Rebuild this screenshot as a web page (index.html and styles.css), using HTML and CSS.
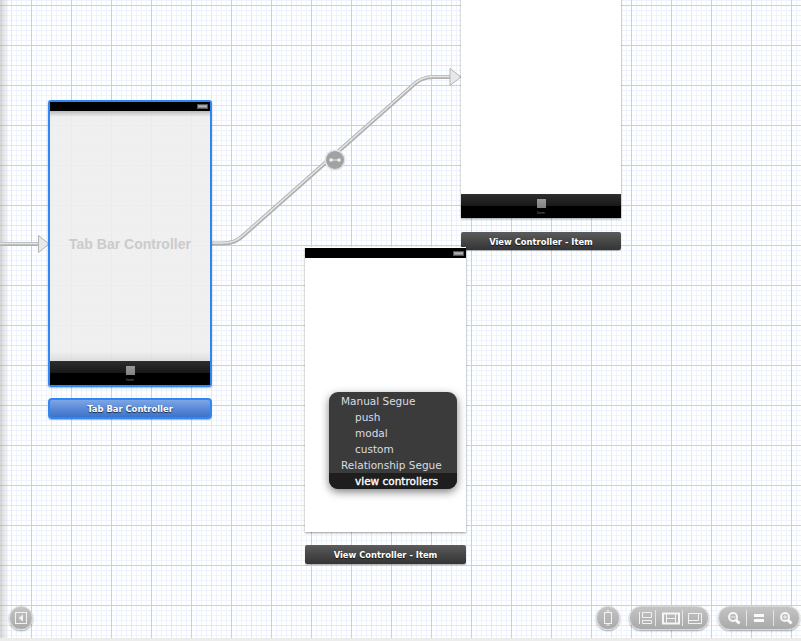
FILE: index.html
```html
<!DOCTYPE html>
<html lang="en">
<head>
<meta charset="utf-8">
<title>Storyboard</title>
<link rel="stylesheet" href="styles.css">
</head>
<body>
<main class="canvas">
  <svg class="segues" width="801" height="641" viewBox="0 0 801 641">
    <g fill="none" stroke-linecap="butt">
      <path class="seg-out" d="M0 244H40"/>
      <path class="seg-in" d="M0 243.500H40"/>
      <path class="seg-out" d="M212 243.500H222C232 243.500 238 241 245 234L410 88C418 80 424 77 434 77H452"/>
      <path class="seg-in" d="M212 243H222C232 243 238 240.500 245 233.500L410 87.500C418 79.500 424 76.500 434 76.500H452"/>
    </g>
    <path class="arrow" d="M38.500 235.500L49 244L38.500 252.500Z"/>
    <path class="arrow" d="M450 68.500L461 77L450 85.500Z"/>
    <circle class="seg-ring" cx="335" cy="160" r="10.500"/>
    <circle class="seg-dot" cx="335" cy="160" r="9"/>
    <path class="seg-link" d="M331 160H339"/>
    <circle class="seg-pt" cx="331" cy="160" r="1.700"/>
    <circle class="seg-pt" cx="339" cy="160" r="1.700"/>
  </svg>

  <section class="scene scene-tab">
    <div class="screen screen-sel">
      <div class="status"><span class="battery"></span></div>
      <div class="body body-grey"><span class="ghost">Tab Bar Controller</span></div>
      <div class="tabbar"><span class="tab-icon"></span><span class="tab-text">Item</span></div>
    </div>
  </section>
  <div class="label label-sel label-tab">Tab Bar Controller</div>

  <section class="scene scene-top">
    <div class="screen">
      <div class="body"></div>
      <div class="tabbar"><span class="tab-icon"></span><span class="tab-text">Item</span></div>
    </div>
  </section>
  <div class="label label-top">View Controller - Item</div>

  <section class="scene scene-mid">
    <div class="screen screen-mid">
      <div class="status"><span class="battery"></span></div>
      <div class="body"></div>
    </div>
  </section>
  <div class="label label-mid">View Controller - Item</div>

  <ul class="menu">
    <li class="menu-head">Manual Segue</li>
    <li class="menu-item">push</li>
    <li class="menu-item">modal</li>
    <li class="menu-item">custom</li>
    <li class="menu-head">Relationship Segue</li>
    <li class="menu-item menu-active">view controllers</li>
  </ul>

  <footer class="toolbar">
    <div class="pill round">
      <svg width="22" height="24" viewBox="0 0 22 24"><rect class="ic" x="5.500" y="6.500" width="11" height="11"/><path class="ic-fill" d="M13 8.500V15.500L8.500 12Z"/></svg>
    </div>
    <div class="tool-right">
      <div class="pill round">
        <svg width="22" height="24" viewBox="0 0 22 24"><rect class="ic" x="7.500" y="6.500" width="7" height="11"/><path class="ic" d="M9.500 5H12.500M9.500 19H12.500"/></svg>
      </div>
      <div class="pill wide-a">
        <svg width="25" height="24" viewBox="0 0 25 24"><path class="ic" d="M9.500 6V18M12.500 6.500H21.500V11.500H12.500ZM12.500 14.500H21.500V17.500H12.500Z"/></svg>
        <i class="sep"></i>
        <svg width="26" height="24" viewBox="0 0 26 24"><path class="ic2" d="M7 7.500H23V17.500H7Z"/><path class="ic" d="M10.500 7.500V17.500M19.500 7.500V17.500M10.500 12.500H19.500"/></svg>
        <i class="sep"></i>
        <svg width="25" height="24" viewBox="0 0 25 24"><path class="ic" d="M5.500 17.500H18.500V7.500H5.500ZM5.500 14.500H15.500V7.500"/></svg>
      </div>
      <div class="pill wide-b">
        <svg width="27" height="24" viewBox="0 0 27 24"><circle class="ic2" cx="14" cy="11" r="4"/><path class="ic3" d="M17 14L20.500 17.500"/><path class="ic" d="M11.500 11H16.500"/></svg>
        <i class="sep"></i>
        <svg width="26" height="24" viewBox="0 0 26 24"><path class="ic3" d="M7 9.500H17M7 14.500H17"/></svg>
        <i class="sep"></i>
        <svg width="25" height="24" viewBox="0 0 25 24"><circle class="ic2" cx="11" cy="11" r="4"/><path class="ic3" d="M14 14L17.500 17.500"/><path class="ic" d="M8.500 11H13.500M11 8.500V13.500"/></svg>
      </div>
    </div>
  </footer>
</main>
</body>
</html>
```

FILE: styles.css
```css
* { box-sizing: border-box; }
html, body { margin: 0; padding: 0; }
body { width: 801px; height: 641px; overflow: hidden; background: #fff; }

.canvas {
  position: relative;
  width: 801px;
  height: 641px;
  overflow: hidden;
  background-color: #fff;
  background-image:
    linear-gradient(to right, #bcd3f2 1px, transparent 1px),
    linear-gradient(to bottom, #bcd3f2 1px, transparent 1px),
    linear-gradient(to right, #dde8f9 1px, transparent 1px),
    linear-gradient(to bottom, #dde8f9 1px, transparent 1px),
    linear-gradient(to right, #eef4fd 1px, transparent 1px),
    linear-gradient(to bottom, #eef4fd 1px, transparent 1px);
  background-size: 40px 40px, 40px 40px, 20px 20px, 20px 20px, 5px 5px, 5px 5px;
  background-position: 31px 0, 0 5px, 11px 0, 0 5px, 1px 0, 0 0;
}
.canvas::before {
  content: "";
  position: absolute;
  left: 0; top: 0; bottom: 0;
  width: 8px;
  background: linear-gradient(to right, rgba(150,150,150,.4), rgba(200,200,200,.1));
}
.canvas::after {
  content: "";
  position: absolute;
  left: 0; right: 0; bottom: 0;
  height: 3px;
  background: #ececec;
}

.segues { position: absolute; left: 0; top: 0; }
.seg-out { stroke: #b0b0b0; stroke-width: 4; }
.seg-in { stroke: #e6e6e6; stroke-width: 1.500; }
.arrow { fill: #e8e8e8; stroke: #b4b4b4; stroke-width: 1; stroke-linejoin: round; }
.seg-ring { fill: #e2e2e2; }
.seg-dot { fill: #a2a2a2; }
.seg-link { stroke: #e6e6e6; stroke-width: 1; }
.seg-pt { fill: #f2f2f2; }

.scene { position: absolute; }
.scene-tab { left: 48px; top: 100px; width: 164px; height: 287px; }
.scene-top { left: 461px; top: -60px; width: 160px; height: 278px; }
.scene-mid { left: 305px; top: 247px; width: 161px; height: 285px; }

.screen {
  display: flex;
  flex-direction: column;
  width: 100%;
  height: 100%;
  background: #fff;
  box-shadow: 0 1px 2px rgba(0,0,0,.4);
}
.screen-mid { padding-top: 1px; }
.screen-sel {
  border: 2px solid #2f86f5;
  border-radius: 3px;
  background: transparent;
  box-shadow: 0 1px 2px rgba(0,0,0,.3);
}
.status {
  flex: none;
  display: flex;
  justify-content: flex-end;
  align-items: center;
  height: 10px;
  padding-right: 2px;
  background: #000;
  position: relative;
  z-index: 1;
}
.screen-sel .status { height: 9px; }
.battery {
  width: 11px;
  height: 5px;
  background: linear-gradient(#888, #c0c0c0 40%, #777);
  border: 1px solid #555;
}
.body { flex: 1; min-height: 0; }
.body-grey {
  display: flex;
  align-items: center;
  justify-content: center;
  padding-top: 16px;
  background:
    linear-gradient(to bottom, rgba(0,0,0,.22), transparent 6px),
    linear-gradient(to bottom, transparent 240px, rgba(0,0,0,.08)),
    rgba(238,238,238,.88);
}
.ghost {
  font: bold 14px "Liberation Sans", Arial, sans-serif;
  color: #cbcbcb;
  white-space: nowrap;
}
.tabbar {
  flex: none;
  height: 24px;
  display: flex;
  flex-direction: column;
  align-items: center;
  padding-top: 5px;
  background: linear-gradient(#3a3a3a 0, #222 1px, #2c2c2c 1px, #181818 12px, #000 12px);
}
.tab-icon {
  width: 9px;
  height: 9px;
  background: linear-gradient(#9a9a9a, #808080);
}
.tab-text {
  margin-top: 2px;
  font: 4px/6px "Liberation Sans", Arial, sans-serif;
  color: #777;
}

.label {
  position: absolute;
  display: flex;
  align-items: center;
  justify-content: center;
  font: bold 8.400px "DejaVu Sans", sans-serif;
  color: #fff;
  text-shadow: 0 1px 1px rgba(0,0,0,.7);
  background: linear-gradient(#5c5c5c, #474747 50%, #343434);
  border-radius: 2px;
  box-shadow: 0 1px 1px rgba(0,0,0,.3);
}
.label-top { left: 461px; top: 232px; width: 160px; height: 18px; padding-top: 1px; }
.label-mid { left: 305px; top: 545px; width: 161px; height: 19px; }
.label-sel {
  background: linear-gradient(#7da6e4, #5a8ad8 50%, #3f72c8);
  border: 2px solid #2f86f5;
  border-radius: 4px;
}
.label-tab { left: 48px; top: 398px; width: 164px; height: 21px; }

.menu {
  position: absolute;
  left: 329px;
  top: 392px;
  width: 128px;
  height: 97px;
  margin: 0;
  padding: 1px 0 0;
  list-style: none;
  overflow: hidden;
  background: #3b3b3b;
  border-radius: 9px;
  box-shadow: 0 3px 8px rgba(0,0,0,.5);
  font: 10.500px/16px "DejaVu Sans", sans-serif;
  color: #d9dde4;
}
.menu-head { padding-left: 12px; white-space: nowrap; }
.menu-item { padding-left: 26px; white-space: nowrap; }
.menu-active {
  height: 17px;
  background: #1e1e1e;
  color: #fff;
  -webkit-text-stroke: .35px #fff;
}

.toolbar {
  position: absolute;
  left: 9px;
  right: 1px;
  bottom: 11px;
  display: flex;
  justify-content: space-between;
  align-items: center;
}
.tool-right { display: flex; gap: 9px; align-items: center; }
.pill {
  display: flex;
  align-items: center;
  justify-content: center;
  height: 24px;
  border-radius: 12px;
  background: linear-gradient(#c4c4c4, #a9a9a9);
  border: 1px solid #d8d8d8;
  box-shadow: 0 1px 2px rgba(0,0,0,.35);
}
.pill svg { display: block; flex: none; }
.round { width: 24px; }
.wide-a { width: 80px; }
.wide-b { width: 82px; }
.sep { width: 1px; height: 16px; background: #e4e4e4; flex: none; }
.ic { fill: none; stroke: #f2f2f2; stroke-width: 1; }
.ic2 { fill: none; stroke: #f6f6f6; stroke-width: 2; }
.ic3 { fill: none; stroke: #fafafa; stroke-width: 3; }
.ic-fill { fill: #f2f2f2; }
```
